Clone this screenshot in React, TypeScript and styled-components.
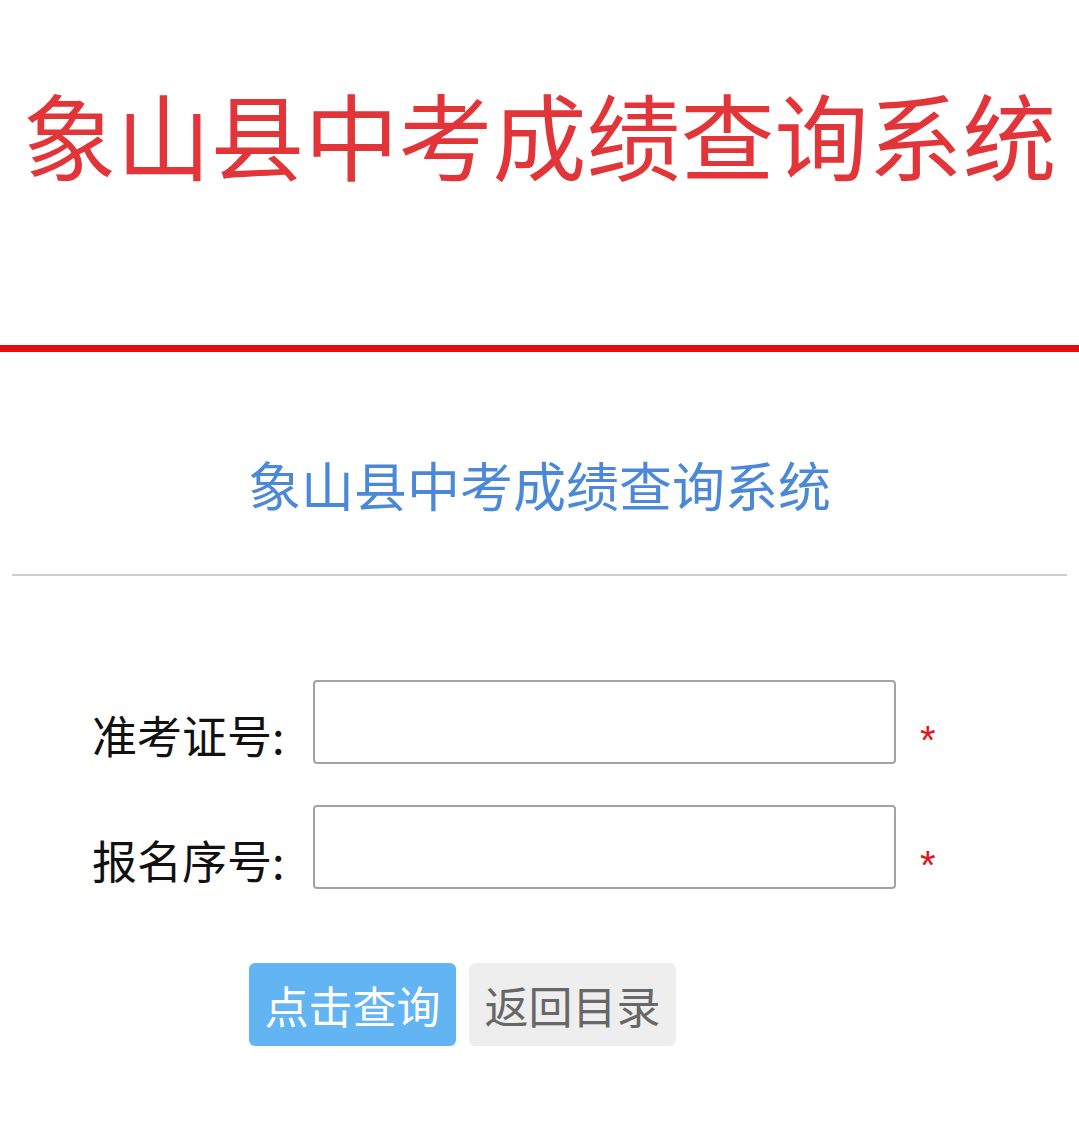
import { FC } from 'react';
import styled, { createGlobalStyle } from 'styled-components';

const GlobalStyle = createGlobalStyle`
  html, body {
    margin: 0;
    padding: 0;
    background: #fff;
  }
  body {
    font-family: "Noto Sans CJK SC", "Noto Sans", sans-serif;
  }
`

const Page = styled.div`
  width: 1079px;
  min-height: 1134px;
  background: #fff;
  display: flex;
  flex-direction: column;
`

const Header = styled.header`
  height: 345px;
  box-sizing: border-box;
  padding-top: 82px;
  text-align: center;

  h1 {
    margin: 0;
    font-size: 94px;
    line-height: 103px;
    font-weight: 400;
    color: #e23539;
    white-space: nowrap;
  }
`

const RedRule = styled.div`
  height: 7px;
  background: #e90a0d;
`

const SubTitle = styled.h2`
  margin: 103px 0 0;
  font-size: 53px;
  line-height: 58px;
  font-weight: 400;
  text-align: center;
  color: #4c88d8;
  white-space: nowrap;
`

const GrayRule = styled.hr`
  margin: 61px 12px 0;
  border: none;
  height: 2px;
  background: #cfcfd3;
`

const Form = styled.form`
  margin-top: 104px;
  display: flex;
  flex-direction: column;
  gap: 41px;
`

const Row = styled.div`
  display: flex;
  align-items: flex-end;
  padding-left: 92px;
`

const Label = styled.label`
  width: 221px;
  font-size: 45px;
  line-height: 46px;
  color: #111;
  margin-bottom: 6px;
  white-space: nowrap;
`

const Input = styled.input`
  width: 583px;
  height: 84px;
  box-sizing: border-box;
  border: 2px solid #a3a3a3;
  border-radius: 4px;
  background: #fff;
  font-size: 40px;
  padding: 0 12px;
  outline: none;
`

const Required = styled.span`
  font-family: "Liberation Sans", sans-serif;
  color: #e0141a;
  font-size: 40px;
  line-height: 40px;
  margin-left: 24px;
  margin-bottom: 4px;
`

const Actions = styled.div`
  margin-top: 74px;
  padding-left: 249px;
  display: flex;
  gap: 13px;
`

const Button = styled.button<{ $primary?: boolean }>`
  width: 207px;
  height: 83px;
  border: none;
  border-radius: 6px;
  font-family: "Noto Sans CJK SC", sans-serif;
  font-size: 44px;
  padding: 0;
  background: ${p => (p.$primary ? '#62b4f3' : '#eeeeee')};
  color: ${p => (p.$primary ? '#fff' : '#676767')};
  cursor: pointer;
`

const fields = ['准考证号', '报名序号'];

const App: FC = () => {
  return (
    <Page>
      <GlobalStyle />
      <Header>
        <h1>象山县中考成绩查询系统</h1>
      </Header>
      <RedRule />
      <SubTitle>象山县中考成绩查询系统</SubTitle>
      <GrayRule />
      <Form onSubmit={e => e.preventDefault()}>
        {fields.map(f => (
          <Row key={f}>
            <Label>{f}:</Label>
            <Input type="text" />
            <Required>*</Required>
          </Row>
        ))}
      </Form>
      <Actions>
        <Button $primary>点击查询</Button>
        <Button>返回目录</Button>
      </Actions>
    </Page>
  );
};

export default App;
